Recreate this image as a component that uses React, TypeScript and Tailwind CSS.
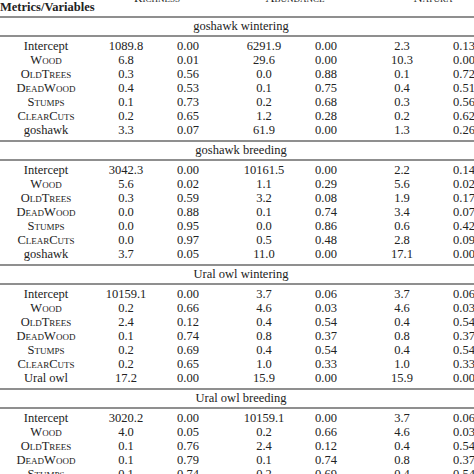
import React from "react";

type Row = [string, string, string, string, string, string, string];

interface Section {
  title: string;
  rows: Row[];
}

const sections: Section[] = [
  {
    title: "goshawk wintering",
    rows: [
      ["Intercept", "1089.8", "0.00", "6291.9", "0.00", "2.3", "0.13"],
      ["Wood", "6.8", "0.01", "29.6", "0.00", "10.3", "0.00"],
      ["OldTrees", "0.3", "0.56", "0.0", "0.88", "0.1", "0.72"],
      ["DeadWood", "0.4", "0.53", "0.1", "0.75", "0.4", "0.51"],
      ["Stumps", "0.1", "0.73", "0.2", "0.68", "0.3", "0.56"],
      ["ClearCuts", "0.2", "0.65", "1.2", "0.28", "0.2", "0.62"],
      ["goshawk", "3.3", "0.07", "61.9", "0.00", "1.3", "0.26"],
    ],
  },
  {
    title: "goshawk breeding",
    rows: [
      ["Intercept", "3042.3", "0.00", "10161.5", "0.00", "2.2", "0.14"],
      ["Wood", "5.6", "0.02", "1.1", "0.29", "5.6", "0.02"],
      ["OldTrees", "0.3", "0.59", "3.2", "0.08", "1.9", "0.17"],
      ["DeadWood", "0.0", "0.88", "0.1", "0.74", "3.4", "0.07"],
      ["Stumps", "0.0", "0.95", "0.0", "0.86", "0.6", "0.42"],
      ["ClearCuts", "0.0", "0.97", "0.5", "0.48", "2.8", "0.09"],
      ["goshawk", "3.7", "0.05", "11.0", "0.00", "17.1", "0.00"],
    ],
  },
  {
    title: "Ural owl wintering",
    rows: [
      ["Intercept", "10159.1", "0.00", "3.7", "0.06", "3.7", "0.06"],
      ["Wood", "0.2", "0.66", "4.6", "0.03", "4.6", "0.03"],
      ["OldTrees", "2.4", "0.12", "0.4", "0.54", "0.4", "0.54"],
      ["DeadWood", "0.1", "0.74", "0.8", "0.37", "0.8", "0.37"],
      ["Stumps", "0.2", "0.69", "0.4", "0.54", "0.4", "0.54"],
      ["ClearCuts", "0.2", "0.65", "1.0", "0.33", "1.0", "0.33"],
      ["Ural owl", "17.2", "0.00", "15.9", "0.00", "15.9", "0.00"],
    ],
  },
  {
    title: "Ural owl breeding",
    rows: [
      ["Intercept", "3020.2", "0.00", "10159.1", "0.00", "3.7", "0.06"],
      ["Wood", "4.0", "0.05", "0.2", "0.66", "4.6", "0.03"],
      ["OldTrees", "0.1", "0.76", "2.4", "0.12", "0.4", "0.54"],
      ["DeadWood", "0.1", "0.79", "0.1", "0.74", "0.8", "0.37"],
      ["Stumps", "0.1", "0.74", "0.2", "0.69", "0.4", "0.54"],
      ["ClearCuts", "0.2", "0.65", "1.0", "0.33", "1.0", "0.33"],
    ],
  },
];

const variables = ["Wood", "OldTrees", "DeadWood", "Stumps", "ClearCuts"];

function Rule() {
  return <div className="h-[2px] bg-[#8f8f8f]" />;
}

function Cell({ value }: { value: string }) {
  return <div className="w-[62px] shrink-0 text-center">{value}</div>;
}

function DataRow({ row }: { row: Row }) {
  const [label, ...values] = row;
  const smallCaps = variables.includes(label);

  return (
    <div className="flex h-[14px] leading-[14px]">
      <div
        className={`w-[92px] shrink-0 text-center ${smallCaps ? "[font-variant:small-caps]" : ""}`}
      >
        {label}
      </div>
      <div className="ml-[3px] flex shrink-0">
        <Cell value={values[0]} />
        <Cell value={values[1]} />
      </div>
      <div className="ml-[14px] flex shrink-0">
        <Cell value={values[2]} />
        <Cell value={values[3]} />
      </div>
      <div className="ml-[14px] flex shrink-0">
        <Cell value={values[4]} />
        <Cell value={values[5]} />
      </div>
    </div>
  );
}

export default function App() {
  return (
    <div className="w-[474px] h-[474px] overflow-hidden bg-white text-[#222] font-['Liberation_Serif','Times_New_Roman',serif] text-[12.5px]">
      <div className="w-[482px] -mt-[9px]">
        {/* Header */}
        <div className="flex items-end">
          <div className="w-[95px] shrink-0 pb-[2px] leading-[14px] font-bold">
            Metrics/Variables
          </div>
          <div className="w-[124px] shrink-0 pb-[11px] leading-[14px] text-center [font-variant:small-caps]">
            Richness
          </div>
          <div className="ml-[14px] w-[124px] shrink-0 pb-[11px] leading-[14px] text-center [font-variant:small-caps]">
            Abundance
          </div>
          <div className="ml-[14px] w-[124px] shrink-0 pb-[11px] leading-[14px] text-center [font-variant:small-caps]">
            Natura
          </div>
        </div>

        {sections.map((section) => (
          <div key={section.title}>
            <Rule />
            <div className="h-[17px] leading-[17px] text-center">{section.title}</div>
            <Rule />
            <div className="pt-[2px] pb-[3px]">
              {section.rows.map((row) => (
                <DataRow key={row[0]} row={row} />
              ))}
            </div>
          </div>
        ))}
      </div>
    </div>
  );
}
